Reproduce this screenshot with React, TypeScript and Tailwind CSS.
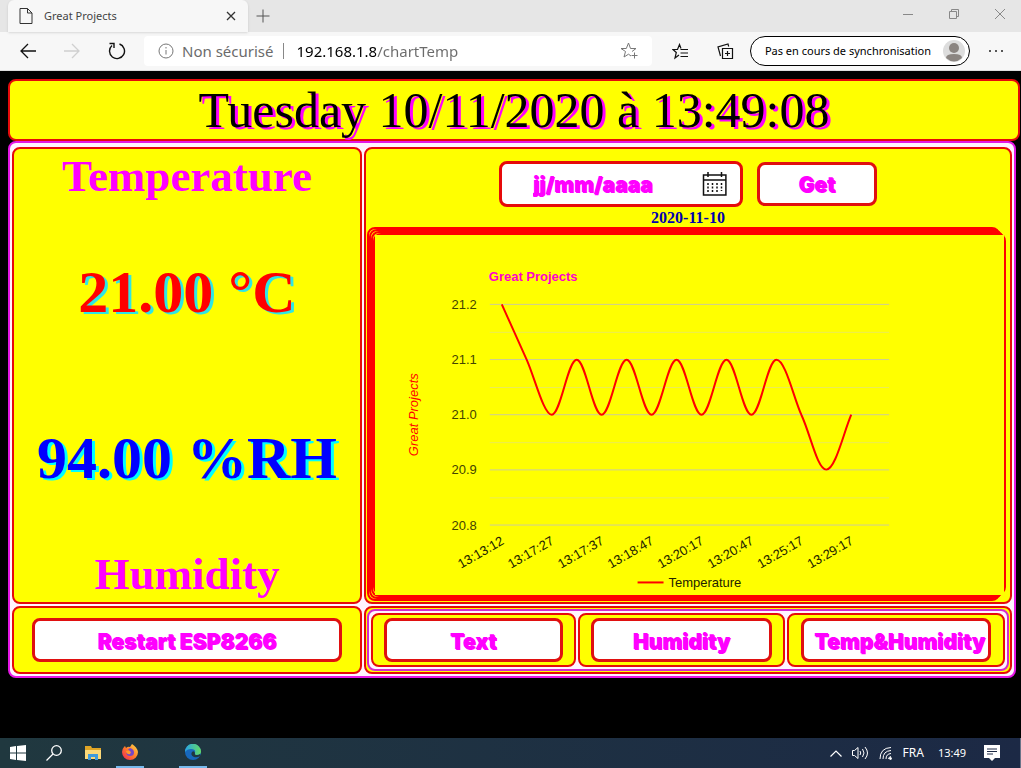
import type { ReactNode } from "react";

const serif = "font-['Liberation_Serif',serif]";
const magenta = "text-[#ff00ff]";

const xLabels = ["13:13:12", "13:17:27", "13:17:37", "13:18:47", "13:20:17", "13:20:47", "13:25:17", "13:29:17"];
const yLabels = ["21.2", "21.1", "21.0", "20.9", "20.8"];

function Cell({ className, children }: { className: string; children: ReactNode }) {
  return <div className={`rounded-lg border-2 border-[#e60a0a] bg-[#ffff00] ${className}`}>{children}</div>;
}

function PageButton({ className, children }: { className: string; children: ReactNode }) {
  return (
    <button
      type="button"
      className={`h-11 rounded-lg border-3 border-[#e01010] bg-white pt-0.5 font-['Inter',sans-serif] text-[21px] font-black whitespace-nowrap text-[#ff00ff] [text-shadow:1px_1px_#ff00ff] ${className}`}
    >
      {children}
    </button>
  );
}

function TemperatureChart() {
  return (
    <svg viewBox="0 0 630 361" className="block h-auto w-full bg-[#ffff00] font-['Liberation_Sans',sans-serif]" role="img" aria-label="Temperature">
      <text x="114" y="46" fontSize="13" fontWeight="700" fill="#ff00cc">Great Projects</text>
      {yLabels.map((label, i) => (
        <g key={label}>
          <line x1="115" x2="515" y1={69.5 + i * 55.25} y2={69.5 + i * 55.25} stroke="#cccc99" />
          {i < 4 && <line x1="115" x2="515" y1={97.5 + i * 55.25} y2={97.5 + i * 55.25} stroke="#ebeb55" />}
          <text x="102" y={74 + i * 55.25} textAnchor="end" fontSize="13" fill="#444400">{label}</text>
        </g>
      ))}
      {xLabels.map((label, i) => (
        <text key={label} transform={`translate(${130 + i * 50} 309) rotate(-30)`} textAnchor="end" fontSize="13" fill="#222200">
          {label}
        </text>
      ))}
      <text transform="translate(43 180) rotate(-90)" textAnchor="middle" fontSize="13" fontStyle="italic" fill="#ff0000">Great Projects</text>
      <path
        d="M127 69.500 L152 125 C160 143 169 180 177 180 C186 180 193 125 202 125 C211 125 218 180 227 180 C236 180 243 125 252 125 C261 125 268 180 277 180 C286 180 293 125 302 125 C311 125 318 180 327 180 C336 180 343 125 352 125 C361 125 368 180 377 180 C386 180 393 125 402 125 C411 125 419 162 427 180 C436 199 443 235 452 235 C461 235 469 199 477 180"
        fill="none"
        stroke="#ff0000"
        strokeWidth="2"
      />
      <line x1="263" x2="289" y1="348" y2="348" stroke="#ff0000" strokeWidth="2" />
      <text x="294" y="353" fontSize="13" fill="#222200">Temperature</text>
    </svg>
  );
}

function BrowserChrome() {
  return (
    <header className="bg-[#f7f7f7] font-['Noto_Sans',sans-serif]">
      <div className="flex h-8 items-stretch bg-[#e6e6e6] pl-2">
        <div className="flex w-60 items-center rounded-t-md bg-[#f7f7f7] pr-3 pl-2.5 shadow-sm">
          <svg width="16" height="16" viewBox="0 0 16 16" fill="none" stroke="#333"><path d="M2 .5h7.500L14 5v10.500H2zM9.500.5V5H14" /></svg>
          <span className="ml-2.5 flex-1 text-[11px] text-[#444]">Great Projects</span>
          <button type="button" aria-label="Close tab">
            <svg width="10" height="10" viewBox="0 0 10 10" stroke="#333" strokeWidth="1.300"><path d="M1 1l8 8M9 1L1 9" /></svg>
          </button>
        </div>
        <button type="button" aria-label="New tab" className="ml-2">
          <svg width="14" height="14" viewBox="0 0 14 14" stroke="#555"><path d="M7 .5v13M.5 7h13" /></svg>
        </button>
        <div className="ml-auto flex items-center gap-9 pr-4 pb-1">
          <button type="button" aria-label="Minimize"><svg width="10" height="10" viewBox="0 0 10 10" stroke="#888"><path d="M0 5.500h10" /></svg></button>
          <button type="button" aria-label="Restore"><svg width="10" height="10" viewBox="0 0 10 10" fill="none" stroke="#888"><path d="M.5 2.500h7v7h-7zM2.500 2.500v-2h7v7h-2" /></svg></button>
          <button type="button" aria-label="Close"><svg width="10" height="10" viewBox="0 0 10 10" stroke="#888"><path d="M0 0l10 10M10 0L0 10" /></svg></button>
        </div>
      </div>
      <div className="flex h-[39px] items-center border-b border-[#ddd] pl-5">
        <button type="button" aria-label="Back"><svg className="block" width="16" height="16" viewBox="0 0 16 16" fill="none" stroke="#111" strokeWidth="1.300"><path d="M16 8H1M8 1L1 8l7 7" /></svg></button>
        <button type="button" aria-label="Forward" className="ml-7"><svg className="block" width="16" height="16" viewBox="0 0 16 16" fill="none" stroke="#d0d0d0" strokeWidth="1.300"><path d="M0 8h15M8 1l7 7-7 7" /></svg></button>
        <button type="button" aria-label="Refresh" className="ml-7"><svg className="block" width="18" height="18" viewBox="0 0 18 18" fill="none" stroke="#111" strokeWidth="1.400"><path d="M11.500 2A7.500 7.500 0 1 1 4 3.500M1.500 1.500h4.500v4.500" /></svg></button>
        <div className="ml-[18px] flex h-[30px] min-w-0 flex-1 items-center rounded bg-white px-3.5">
          <svg width="16" height="16" viewBox="0 0 16 16" fill="none" stroke="#777"><circle cx="8" cy="8" r="7" /><path d="M8 7v4.500M8 4v1.500" /></svg>
          <span className="ml-2 text-[15px] text-[#6b6b6b]">Non sécurisé</span>
          <span className="mr-3 ml-2.5 h-4 w-px bg-[#888]" />
          <input
            aria-label="Address"
            defaultValue="192.168.1.8/chartTemp"
            className="min-w-0 flex-1 bg-linear-to-r from-black from-[80px] to-[#6b6b6b] to-[80px] bg-clip-text text-[15px] text-transparent outline-none"
          />
          <svg width="18" height="18" viewBox="0 0 18 18" fill="none" stroke="#777"><path d="M11 14l-2.500-1.800L4 15l1.500-5.500L1 6.500h5.300L8.500 1l2 5.500H16l-4 3M14.500 10.500v6M11.500 13.500h6" /></svg>
        </div>
        <button type="button" aria-label="Favorites" className="ml-5"><svg className="block" width="17" height="17" viewBox="0 0 17 17" fill="none" stroke="#111" strokeWidth="1.200"><path d="M7 12l-4 3 1.300-5.500L1 6.500h4.500L7.500 1.500l1.500 4M8.500 6.500H16M8.500 10H16M8.500 13.500H16" /></svg></button>
        <button type="button" aria-label="Collections" className="ml-7"><svg className="block" width="17" height="17" viewBox="0 0 17 17" fill="none" stroke="#111" strokeWidth="1.200"><path d="M5.500 5.500h10v10h-10zM10.500 8v5M8 10.500h5M3.500 13L1 4l10-3 .7 2.500" /></svg></button>
        <button type="button" className="ml-4 flex h-[30px] items-center rounded-full border border-black bg-white pr-1 pl-3.5 text-[11px] text-black">
          Pas en cours de synchronisation
          <svg className="ml-3" width="22" height="22" viewBox="0 0 22 22"><circle cx="11" cy="11" r="11" fill="#ddd" /><circle cx="11" cy="8" r="5" fill="#8b8581" /><path d="M3 18q0-4 8-4t8 4q-8 7-16 0" fill="#8b8581" /></svg>
        </button>
        <button type="button" aria-label="More" className="mr-[17px] ml-[18px]"><svg className="block" width="16" height="4" viewBox="0 0 16 4" fill="#222"><circle cx="2" cy="2" r="1" /><circle cx="8" cy="2" r="1" /><circle cx="14" cy="2" r="1" /></svg></button>
      </div>
    </header>
  );
}

function Taskbar() {
  return (
    <footer className="flex h-[30px] items-center bg-linear-to-r from-[#20383f] to-[#1c2945] font-['Noto_Sans',sans-serif] text-white">
      <button type="button" aria-label="Start" className="ml-2.5"><svg className="block" width="16" height="16" viewBox="0 0 16 16" fill="#fff"><path d="M0 2l6-1v6.500H0zM7 1l9-1v7.500H7zM0 8.500h6V15l-6-1zM7 8.500h9V16l-9-1z" /></svg></button>
      <button type="button" aria-label="Search" className="ml-5"><svg className="block" width="16" height="16" viewBox="0 0 16 16" fill="none" stroke="#fff" strokeWidth="1.300"><circle cx="10.500" cy="5.500" r="4.800" /><path d="M7 9L.5 15.500" /></svg></button>
      <button type="button" aria-label="File Explorer" className="ml-[23px]"><svg className="block" width="16" height="14" viewBox="0 0 16 14"><path d="M0 0h6l1 2h9v11H0z" fill="#e0a526" /><path d="M0 4h16v9H0z" fill="#fcd978" /><path d="M3 14V8h10v6h-3v-3H6v3z" fill="#3f9bdc" /></svg></button>
      <button type="button" aria-label="Firefox" className="ml-[15px] flex h-full w-7 items-center justify-center border-b-2 border-[#76b9ed]">
        <svg width="16" height="16" viewBox="0 0 16 16"><defs><linearGradient id="fox" x1="1" y1="0" x2="0" y2="1"><stop stopColor="#ffe14a" /><stop offset=".5" stopColor="#ff7a2a" /><stop offset="1" stopColor="#f0205a" /></linearGradient></defs><path d="M2 3l1-1 1 2q2-2 4-1l2-3q5 3 6 8a8 8 0 0 1-16 0Q0 5 2 3" fill="url(#fox)" /><path d="M8 4q4 1 4 4.500T8 12 4.500 8.500L8 7 6 5.500z" fill="#7446c8" /><path d="M4 7q3-1 5 1l-1 2q-3 1-4-3" fill="#ff9a2a" /></svg>
      </button>
      <button type="button" aria-label="Edge" className="ml-[35px] flex h-full w-7 items-center justify-center border-b-2 border-[#76b9ed]">
        <svg width="16" height="16" viewBox="0 0 16 16"><defs><linearGradient id="edge" x1="0" y1="0" x2="1" y2="0"><stop stopColor="#2aa5e4" /><stop offset="1" stopColor="#63dc64" /></linearGradient></defs><circle cx="8" cy="8" r="8" fill="#1768bd" /><path d="M0 8a8 8 0 0 1 16-.5Q16 11 12 11q-3 0-2-2 1-4-4-4Q2 5 0 8" fill="url(#edge)" /><path d="M10 9q-1 2 2 2 2 0 3-1v2q-3 2-6 1-4-2-2-5 2-2 3 1" fill="#20383f" /></svg>
      </button>
      <div className="ml-auto flex h-full items-center">
        <svg width="12" height="7" viewBox="0 0 12 7" fill="none" stroke="#fff" strokeWidth="1.200"><path d="M.5 6.500L6 1l5.500 5.500" /></svg>
        <svg className="ml-2.5" width="17" height="14" viewBox="0 0 17 14" fill="none" stroke="#fff"><path d="M.5 4.500h2l3.500-3v11l-3.500-3h-2zM8 5q1.500 2 0 4M10.500 3q3 4 0 8M13 1q5 6 0 12" /></svg>
        <svg className="ml-2.5" width="14" height="14" viewBox="0 0 14 14" fill="none" stroke="#fff"><path d="M1 13Q1 2 12 1.500M4 13q0-8 8-8.500M7 13q0-5 5-5.500M9.500 13q0-2 2.500-2.500" /><circle cx="11.500" cy="12.500" r="1" fill="#fff" /></svg>
        <span className="ml-2.5 text-xs">FRA</span>
        <span className="ml-3.5 text-[11px]">13:49</span>
        <button type="button" aria-label="Notifications" className="ml-[18px]"><svg className="block" width="16" height="16" viewBox="0 0 16 16"><path d="M0 0h16v13h-5l-3 3-3-3H0z" fill="#fff" /><path d="M3 4h10M3 6.500h10M3 9h6" stroke="#1c2945" /></svg></button>
        <span className="ml-5 h-full w-px bg-[#6a7488]" />
      </div>
    </footer>
  );
}

export default function App() {
  return (
    <div className="flex min-h-screen flex-col bg-black">
      <BrowserChrome />
      <main className={`flex-1 pt-2 pl-2 ${serif}`}>
        <h1 className="mr-px flex h-[62px] items-center justify-center rounded-lg border-2 border-[#e60a0a] bg-[#ffff00] text-[50px] whitespace-nowrap text-black [text-shadow:3px_2px_#ff00ff]">
          Tuesday 10/11/2020 à 13:49:08
        </h1>
        <div className="mr-[5px] grid grid-cols-[350fr_648fr] gap-0.5 rounded-lg border-2 border-[#e617e6] bg-[#fff4ff] px-0.5 pt-1 pb-0.5">
          <Cell className="flex flex-col items-center font-bold">
            <h2 className={`mt-px text-[45px] leading-[52px] ${magenta}`}>Temperature</h2>
            <p className="mt-14 text-6xl leading-[68px] text-[#ff0000] [text-shadow:3px_2px_#2ee6e6]">21.00 °C</p>
            <p className="mt-[98px] text-6xl leading-[68px] text-[#0000ff] [text-shadow:3px_2px_#00ffff]">94.00 %RH</p>
            <h2 className={`mt-auto pb-0.5 text-[45px] leading-[52px] ${magenta}`}>Humidity</h2>
          </Cell>
          <Cell className="pt-3 pb-px">
            <form className="flex items-center justify-center gap-3.5" onSubmit={(e) => e.preventDefault()}>
              <div className="flex h-[46px] w-[244px] items-center rounded-lg border-3 border-[#e60a0a] bg-white pr-3 pl-[31px]">
                <input
                  aria-label="Date"
                  placeholder="jj/mm/aaaa"
                  className="min-w-0 flex-1 pt-0.5 font-['Inter',sans-serif] text-[21px] font-black text-[#ff00ff] outline-none [text-shadow:1px_1px_#ff00ff] placeholder:text-[#ff00ff]"
                />
                <svg width="26" height="24" viewBox="0 0 26 24" fill="none" stroke="#111" strokeWidth="1.500"><path d="M1.500 3h22.400v20H1.500zM1.500 8h22.400M6 0v5M19.500 0v5" /><path d="M6 11v10M10.500 11v10M15 11v10M19.500 11v8" strokeDasharray="2 1.500" /></svg>
              </div>
              <PageButton className="w-[120px]">Get</PageButton>
            </form>
            <p className="pt-0.5 text-center text-base leading-[18px] font-bold text-[#0000b0]">2020-11-10</p>
            <div className="mr-2.5 ml-px rounded-lg border-2 border-[#ff0000]">
              <div className="-mr-1 rounded-lg border-2 border-[#ff0000]">
                <div className="-mr-1 rounded-lg border-2 border-[#ff0000]">
                  <div className="-mr-1 rounded-lg border-2 border-b-0 border-[#ff0000]">
                    <TemperatureChart />
                  </div>
                </div>
              </div>
            </div>
          </Cell>
          <Cell className="flex items-center px-[18px]">
            <PageButton className="w-full">Restart ESP8266</PageButton>
          </Cell>
          <Cell className="p-px">
            <div className="grid grid-cols-[204fr_207fr_217fr] gap-0.5 rounded-lg border-2 border-[#d42acb] bg-[#fff4ff] p-0.5">
              <Cell className="flex px-[11px] py-[3px]"><PageButton className="w-full">Text</PageButton></Cell>
              <Cell className="flex px-[11px] py-[3px]"><PageButton className="w-full">Humidity</PageButton></Cell>
              <Cell className="flex px-3 py-[3px]"><PageButton className="w-full min-w-0 pl-2.5 text-left">Temp&amp;Humidity</PageButton></Cell>
            </div>
          </Cell>
        </div>
      </main>
      <Taskbar />
    </div>
  );
}
